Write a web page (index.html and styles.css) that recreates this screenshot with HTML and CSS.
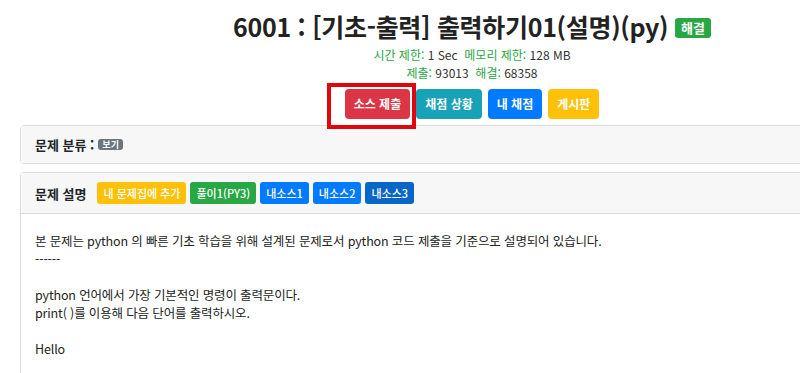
FILE: index.html
```html
<!DOCTYPE html>
<html lang="ko">
<head>
  <meta charset="UTF-8" />
  <meta name="viewport" content="width=device-width, initial-scale=1.0"/>
  <title>6001 : [기초-출력] 출력하기01(설명)(py)</title>
  <link rel="stylesheet" href="styles.css">
</head>
<body>
  <div class="page">
    <div class="problem-head">
      <h1 class="title">6001 : [기초-출력] 출력하기01(설명)(py) <span class="badge badge-solved">해결</span></h1>
      <div class="meta">
        <span class="label">시간 제한:</span> 1 Sec &nbsp;<span class="label">메모리 제한:</span> 128 MB
      </div>
      <div class="meta">
        <span class="label">제출:</span> 93013 &nbsp;<span class="label">해결:</span> 68358
      </div>
      <div class="actions">
        <a class="btn btn-red marked">소스 제출</a>
        <a class="btn btn-teal">채점 상황</a>
        <a class="btn btn-blue">내 채점</a>
        <a class="btn btn-yellow">게시판</a>
      </div>
    </div>

    <div class="card">
      <div class="card-header">문제 분류 : <span class="badge badge-gray">보기</span></div>
    </div>

    <div class="card">
      <div class="card-header">
        문제 설명
        <span class="tools">
          <a class="btn-sm btn-yellow">내 문제집에 추가</a>
          <a class="btn-sm btn-green">풀이1(PY3)</a>
          <a class="btn-sm btn-blue">내소스1</a>
          <a class="btn-sm btn-blue">내소스2</a>
          <a class="btn-sm btn-navy">내소스3</a>
        </span>
      </div>
      <div class="card-body">
        <p>본 문제는 python 의 빠른 기초 학습을 위해 설계된 문제로서 python 코드 제출을 기준으로 설명되어 있습니다.<br>------</p>
        <p>python 언어에서 가장 기본적인 명령이 출력문이다.<br>print( )를 이용해 다음 단어를 출력하시오.</p>
        <p>Hello</p>
      </div>
    </div>
  </div>
</body>
</html>
```

FILE: styles.css
```css
body {
  margin: 0;
  background: #fff;
  color: #212529;
  font-family: "Noto Sans CJK KR", "Noto Sans", sans-serif;
  overflow: hidden;
}
.page {
  width: 904px;
  margin-left: 20px;
}
.problem-head {
  text-align: center;
  padding-top: 7px;
}
.title {
  margin: 0;
  font-size: 25px;
  font-weight: 700;
  letter-spacing: -0.3px;
  line-height: 39px;
  color: #222;
}
.badge {
  display: inline-block;
  border-radius: 3px;
  color: #fff;
  font-weight: 700;
  letter-spacing: 0;
  vertical-align: middle;
}
.badge-solved {
  background: #28a745;
  font-size: 13px;
  line-height: 20px;
  padding: 0 6px;
  position: relative;
  top: -2px;
}
.badge-gray {
  background: #6c757d;
  font-size: 9px;
  line-height: 11px;
  padding: 0 4px;
}
.meta {
  font-size: 12px;
  line-height: 18px;
  color: #333;
}
.label {
  color: #28a745;
}
.actions {
  display: flex;
  justify-content: center;
  gap: 6px;
  margin-top: 7px;
}
.btn {
  display: inline-block;
  color: #fff;
  font-size: 12px;
  font-weight: 700;
  line-height: 30px;
  padding: 0 9px;
  border-radius: 4px;
}
.marked {
  position: relative;
}
.marked::after {
  content: "";
  position: absolute;
  left: -18px;
  top: -6px;
  right: -6px;
  bottom: -10px;
  border: 4px solid #e0060b;
}
.btn-red { background: #dc3545; }
.btn-teal { background: #17a2b8; }
.btn-blue { background: #007bff; }
.btn-yellow { background: #ffc107; }
.btn-green { background: #28a745; }
.btn-navy { background: #0866c6; }
.card {
  border: 1px solid #dcdcdc;
  border-radius: 4px;
  margin-top: 6px;
  margin-bottom: 8px;
}
.card-header {
  background: #f7f7f7;
  font-size: 13px;
  font-weight: 700;
  height: 37px;
  display: flex;
  align-items: center;
  padding-left: 14px;
}
.card + .card .card-header {
  height: 40px;
  border-bottom: 1px solid #dcdcdc;
}
.card-header .badge {
  margin-left: 4px;
}
.tools {
  display: flex;
  gap: 4px;
  margin-left: 11px;
}
.btn-sm {
  color: #fff;
  font-size: 11px;
  font-weight: 500;
  line-height: 22px;
  padding: 0 6px;
  border-radius: 3px;
}
.card-body {
  padding: 18px 14px;
  font-size: 12.5px;
  letter-spacing: -0.15px;
  line-height: 18px;
  color: #222;
}
.card-body p {
  margin: 0 0 18px;
}
```
